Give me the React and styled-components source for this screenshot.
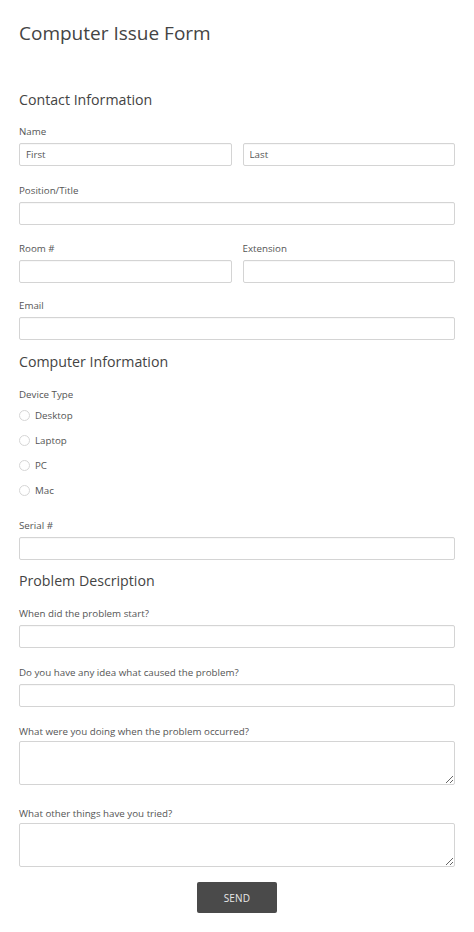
import React from "react";
import styled, { createGlobalStyle } from "styled-components";

const Global = createGlobalStyle`
  html, body { margin: 0; padding: 0; background: #fff; }
  body { font-family: "Open Sans", "Liberation Sans", sans-serif; color: #555; }
  * { box-sizing: border-box; }
`;

const Page = styled.form`
  display: flex;
  flex-direction: column;
  padding: 21px 19px 19px;
`;

const Title = styled.h1`
  margin: 0;
  font-size: 19px;
  line-height: 24px;
  font-weight: 400;
  color: #444;
`;

const Heading = styled.h2`
  margin: ${(p) => p.$top}px 0 0;
  font-size: 14.2px;
  line-height: 20px;
  font-weight: 400;
  color: #444;
`;

const Field = styled.div`
  display: flex;
  flex-direction: column;
  margin-top: ${(p) => p.$top}px;
  min-width: 0;
`;

const Row = styled.div`
  display: grid;
  grid-template-columns: 1fr 1fr;
  column-gap: 11px;
  margin-top: ${(p) => p.$top}px;
`;

const Label = styled.label`
  font-size: 9.75px;
  line-height: 14px;
  color: #555;
  padding-top: 1px;
  margin-bottom: 4px;
`;

const Input = styled.input`
  width: 100%;
  height: 23px;
  border: 1px solid #d4d4d4;
  border-radius: 2px;
  box-shadow: inset 0 1px 1px rgba(0,0,0,0.03);
  padding: 0 6px;
  font-family: inherit;
  font-size: 9.75px;
  color: #555;
  outline: none;
  &::placeholder { color: #555; opacity: 1; }
`;

const TextArea = styled.textarea`
  display: block;
  width: 100%;
  height: 44px;
  margin-top: -2px;
  border: 1px solid #d4d4d4;
  border-radius: 2px;
  padding: 4px 6px;
  font-family: inherit;
  font-size: 9.75px;
  color: #555;
  outline: none;
  resize: vertical;
`;

const RadioRow = styled.label`
  display: flex;
  align-items: center;
  height: 25px;
  font-size: 9.75px;
  color: #555;
  gap: 5px;
`;

const Circle = styled.span`
  width: 11px;
  height: 11px;
  border-radius: 50%;
  border: 1px solid #d6d6d6;
  background: #fff;
  flex: none;
`;

const Radios = styled.div`
  display: flex;
  flex-direction: column;
  margin-top: -3px;
`;

const Send = styled.button`
  align-self: center;
  margin-top: 15px;
  width: 80px;
  height: 31px;
  border: none;
  border-radius: 2px;
  background: #4a4a4a;
  color: #e8e8e8;
  font-family: inherit;
  font-size: 10px;
  letter-spacing: 0.2px;
  text-transform: uppercase;
  cursor: pointer;
`;

const devices = ["Desktop", "Laptop", "PC", "Mac"];

export default function App() {
  return (
    <>
      <Global />
      <Page onSubmit={(e) => e.preventDefault()}>
        <Title>Computer Issue Form</Title>

        <Heading $top={45}>Contact Information</Heading>
        <Field $top={14}>
          <Label>Name</Label>
          <Row $top={0}>
            <Input placeholder="First" />
            <Input placeholder="Last" />
          </Row>
        </Field>
        <Field $top={17}>
          <Label>Position/Title</Label>
          <Input />
        </Field>
        <Row $top={16}>
          <Field $top={0}>
            <Label>Room #</Label>
            <Input />
          </Field>
          <Field $top={0}>
            <Label>Extension</Label>
            <Input />
          </Field>
        </Row>
        <Field $top={15}>
          <Label>Email</Label>
          <Input />
        </Field>

        <Heading $top={12}>Computer Information</Heading>
        <Field $top={15}>
          <Label>Device Type</Label>
          <Radios>
            {devices.map((d) => (
              <RadioRow key={d}>
                <Circle />
                {d}
              </RadioRow>
            ))}
          </Radios>
        </Field>
        <Field $top={15}>
          <Label>Serial #</Label>
          <Input />
        </Field>

        <Heading $top={11}>Problem Description</Heading>
        <Field $top={15}>
          <Label>When did the problem start?</Label>
          <Input />
        </Field>
        <Field $top={17}>
          <Label>Do you have any idea what caused the problem?</Label>
          <Input />
        </Field>
        <Field $top={17}>
          <Label>What were you doing when the problem occurred?</Label>
          <TextArea />
        </Field>
        <Field $top={21}>
          <Label>What other things have you tried?</Label>
          <TextArea />
        </Field>
        <Send type="submit">Send</Send>
      </Page>
    </>
  );
}
